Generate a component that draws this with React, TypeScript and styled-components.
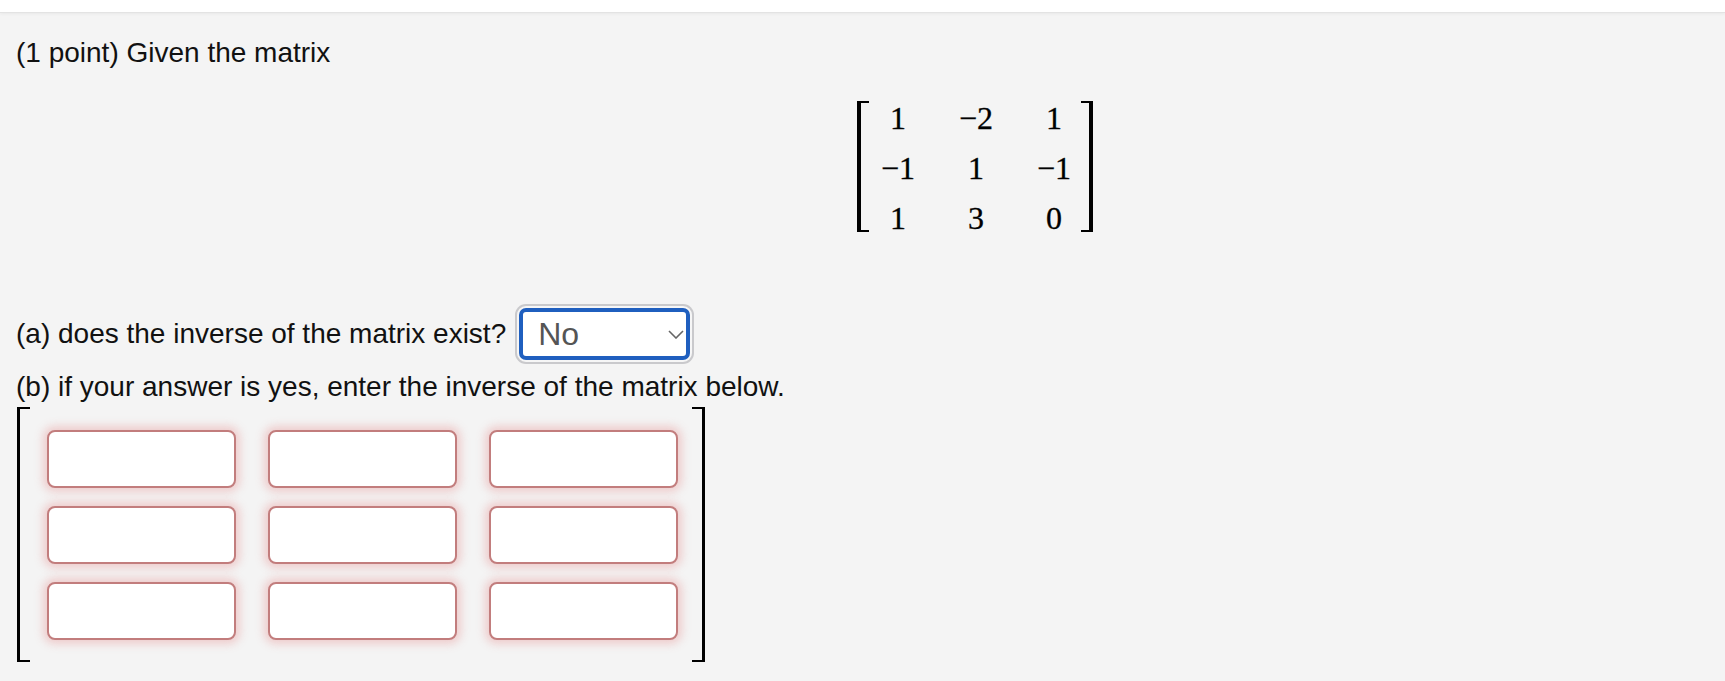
import React from 'react';
import styled, {createGlobalStyle} from 'styled-components';

const GlobalStyle = createGlobalStyle`
  html, body {
    margin: 0;
    padding: 0;
    background: #f4f4f4;
  }
  body {
    font-family: "Liberation Sans", Arial, sans-serif;
    color: #111;
  }
`;

export const TopBar = styled.div`
  height: 12px;
  background: #fff;
  border-bottom: 1px solid #e3e3e3;
  box-shadow: 0 1px 3px rgba(0, 0, 0, 0.05);
`;

export const Content = styled.div`
  padding: 0 16px;
`;

export const Line = styled.div`
  font-size: 28px;
  line-height: 32px;
  margin-top: ${(p: {$top: number}) => p.$top}px;
`;

export const MathDisplay = styled.div`
  display: flex;
  justify-content: center;
  padding-left: 225px;
  margin-top: 32px;
`;

export const Bracket = styled.div<{$side: 'left' | 'right'; $width: number; $stroke: number}>`
  width: ${(p) => p.$width}px;
  box-sizing: border-box;
  border-top: 2.5px solid #000;
  border-bottom: 2.5px solid #000;
  ${(p) => (p.$side === 'left' ? 'border-left' : 'border-right')}: ${(p) => p.$stroke}px solid #000;
  align-self: stretch;
`;

export const MathGrid = styled.div`
  display: grid;
  grid-template-columns: repeat(3, 38px);
  column-gap: 40px;
  row-gap: 22px;
  padding: 3px 8px 0 10px;
  font-family: "Liberation Serif", "Times New Roman", serif;
  font-size: 32px;
  line-height: 28px;
  justify-items: center;
  color: #000;
  -webkit-text-stroke: 0.3px #000;
`;

export const QuestionRow = styled.div`
  display: flex;
  align-items: center;
  height: 52px;
  margin-top: 76px;
  font-size: 28px;
  line-height: 32px;
`;

export const SelectWrap = styled.div`
  position: relative;
  margin-left: 13px;
  width: 171px;
  height: 52px;
`;

export const Select = styled.select`
  appearance: none;
  -webkit-appearance: none;
  box-sizing: border-box;
  width: 100%;
  height: 100%;
  margin: 0;
  padding: 0 0 0 15px;
  border: 4px solid #1f5fbf;
  border-radius: 7px;
  box-shadow: 0 0 0 2px #f6f6f6, 0 0 0 4px #c9c9cc;
  background: #fff;
  font-family: "Liberation Sans", Arial, sans-serif;
  font-size: 32px;
  color: #555;
  outline: none;
`;

export const Chevron = styled.svg`
  position: absolute;
  right: 6px;
  top: 22px;
  pointer-events: none;
`;

export const InputMatrix = styled.div`
  display: flex;
  margin-top: 4px;
  margin-left: 1px;
  height: 255px;
`;

export const InputGrid = styled.div`
  display: grid;
  grid-template-columns: repeat(3, 189px);
  grid-auto-rows: 58px;
  column-gap: 32px;
  row-gap: 18px;
  padding: 23px 14px 22px 17px;
`;

export const AnswerInput = styled.input`
  box-sizing: border-box;
  width: 100%;
  height: 100%;
  margin: 0;
  border: 2px solid #c27d7d;
  border-radius: 8px;
  background: #fff;
  box-shadow: 0 0 9px 4px rgba(232, 150, 150, 0.42);
  font-size: 24px;
  outline: none;
`;

const given = [
  ['1', '\u22122', '1'],
  ['\u22121', '1', '\u22121'],
  ['1', '3', '0'],
];

const App = () => {
  return (
    <>
      <GlobalStyle/>
      <TopBar/>
      <Content>
        <Line $top={24}>(1 point) Given the matrix</Line>
        <MathDisplay>
          <Bracket $side="left" $width={12} $stroke={4}/>
          <MathGrid>
            {given.flat().map((v, i) => (
              <span key={i}>{v}</span>
            ))}
          </MathGrid>
          <Bracket $side="right" $width={12} $stroke={4}/>
        </MathDisplay>
        <QuestionRow>
          (a) does the inverse of the matrix exist?
          <SelectWrap>
            <Select defaultValue="No">
              <option value="?">?</option>
              <option value="Yes">Yes</option>
              <option value="No">No</option>
            </Select>
            <Chevron width="16" height="9" viewBox="0 0 16 9">
              <path d="M1 1 L8 8 L15 1" fill="none" stroke="#666" strokeWidth="1.6"/>
            </Chevron>
          </SelectWrap>
        </QuestionRow>
        <Line $top={11}>(b) if your answer is yes, enter the inverse of the matrix below.</Line>
        <InputMatrix>
          <Bracket $side="left" $width={13} $stroke={3.5}/>
          <InputGrid>
            {Array.from({length: 9}).map((_, i) => (
              <AnswerInput key={i} type="text"/>
            ))}
          </InputGrid>
          <Bracket $side="right" $width={13} $stroke={3.5}/>
        </InputMatrix>
      </Content>
    </>
  );
};

export default App;
